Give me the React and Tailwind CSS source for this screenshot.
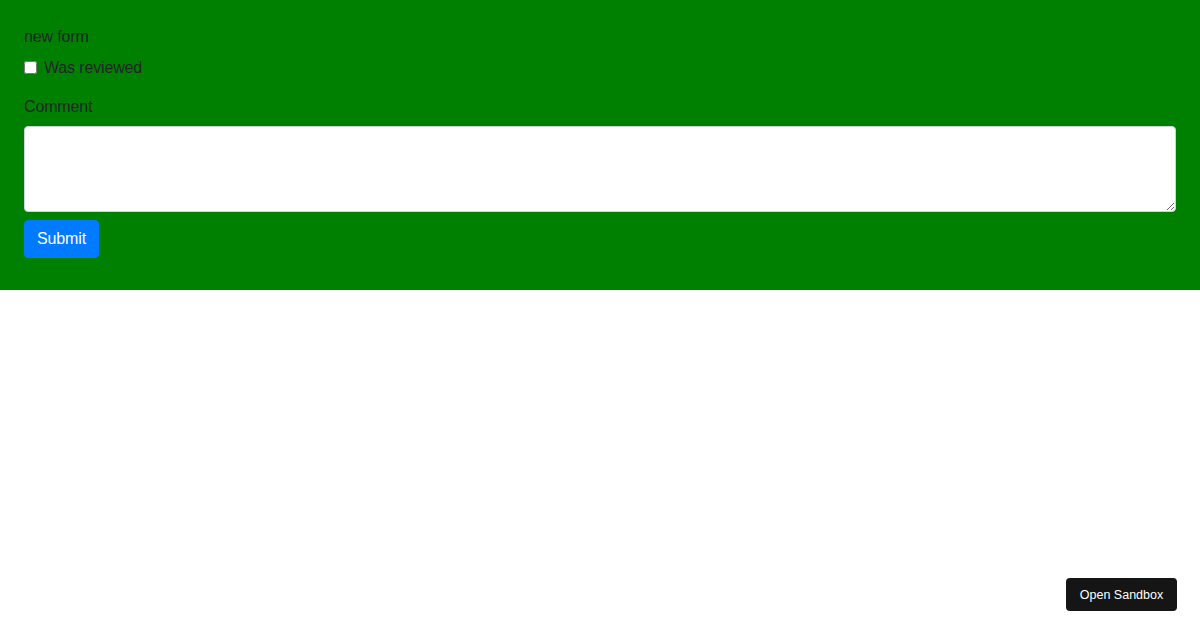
export default function App() {
  return (
    <div className="min-h-[630px] bg-white font-['Liberation_Sans',Arial,sans-serif] text-[16px] leading-6 tracking-[-0.15px] text-[#212529]">
      <div className="bg-[#008000] px-6 pt-[25px] pb-8">
        <div>new form</div>
        <label className="mt-[7px] flex items-start gap-[7px]">
          <input type="checkbox" className="mt-[5px] h-[13px] w-[13px]" />
          <span>Was reviewed</span>
        </label>
        <div className="mt-[15px] mb-[7px]">Comment</div>
        <textarea
          rows={3}
          className="block h-[86px] w-full rounded-[4px] border border-[#ced4da] bg-white px-3 py-1.5"
        />
        <button
          type="button"
          className="mt-2 h-[38px] w-[75px] rounded-[4px] border border-[#007bff] bg-[#007bff] text-white"
        >
          Submit
        </button>
      </div>
      <button
        type="button"
        className="fixed right-[23px] bottom-[19px] h-[33px] w-[111px] rounded-[4px] bg-[#151515] text-[12.5px] tracking-normal text-white"
      >
        Open Sandbox
      </button>
    </div>
  )
}
